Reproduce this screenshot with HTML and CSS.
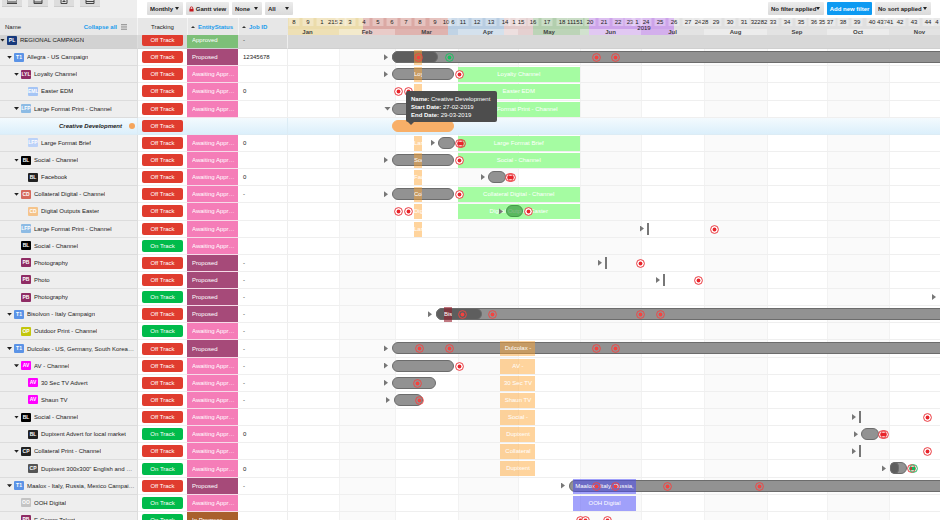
FILE: index.html
```html
<!DOCTYPE html>
<html lang="en">
<head>
<meta charset="utf-8">
<title>Campaign Gantt</title>
<link rel="stylesheet" href="styles.css">
</head>
<body>
<div class="toolbar">
  <div class="quick">
    <button aria-label="Open"><svg viewBox="0 0 10 4"><path d="M0 0V3.500H10V0M1 2H9"/></svg></button>
    <button aria-label="Save"><svg viewBox="0 0 10 4"><path d="M1 0V3.500H9V0M1 2H9"/></svg></button>
    <button aria-label="Upload"><svg viewBox="0 0 10 4"><path d="M2 0V3.500H8V0M5 0V2M3.500 1.500H6.500"/></svg></button>
    <button aria-label="Print"><svg viewBox="0 0 10 4"><path d="M1 0V3.500H9V0M1 1.500H9"/></svg></button>
  </div>
  <div class="tools">
    <span class="pick"><select class="w36" aria-label="Scale"><option>Monthly</option></select></span>
    <button class="tool w43"><svg class="lock" viewBox="0 0 6 6"><path d="M0.500 2.800H5.500V6H0.500Z" fill="#c4161c"/><path d="M1.500 3V1.900A1.500 1.500 0 0 1 4.500 1.900V3" fill="none" stroke="#c4161c"/></svg>Gantt view</button>
    <span class="pick"><select class="w30" aria-label="Grouping"><option>None</option></select></span>
    <span class="pick"><select class="w28" aria-label="Items"><option>All</option></select></span>
  </div>
  <div class="tools filters">
    <span class="pick"><select class="w56" aria-label="Filter"><option>No filter applied</option></select></span>
    <button class="tool primary w45">Add new filter</button>
    <span class="pick"><select class="w56" aria-label="Sort"><option>No sort applied</option></select></span>
  </div>
</div>
<main class="sheet">
  <div class="bands" id="bands"></div>
  <table class="gantt">
    <thead>
      <tr>
        <th class="h-name" scope="col"><span>Name</span><a href="#">Collapse all</a><svg class="menu" viewBox="0 0 6 6"><path d="M0 .5H6M0 2.200H6M0 3.900H6M0 5.600H6" stroke="#8a8a8a" stroke-width=".8"/></svg></th>
        <th class="h-track" scope="col">Tracking</th>
        <th class="h-sort" scope="col"><i class="up"></i><a href="#">EntityStatus</a></th>
        <th class="h-sort" scope="col"><i class="up"></i><a href="#">Job ID</a></th>
        <th class="scale" id="scale" scope="col"></th>
      </tr>
    </thead>
    <tbody id="rows"></tbody>
  </table>
</main>
<script src="gantt.js"></script>
</body>
</html>
```
FILE: styles.css
```css
* { box-sizing: border-box; }
body {
  margin: 0;
  height: 100vh;
  overflow: hidden;
  display: flex;
  flex-direction: column;
  background: #fff;
  color: #222;
  font: 6px/8px "Liberation Sans", Arial, sans-serif;
}
a { color: #1a9cec; text-decoration: none; }
button, select { font: inherit; color: inherit; border: 0; margin: 0; padding: 0; }

.toolbar { display: flex; height: 18px; flex: none; }
.quick { width: 137px; background: #eee; display: flex; gap: 6px; padding-left: 2px; align-items: flex-start; }
.quick button { width: 20px; height: 7px; background: #ddd; border-bottom: 1px solid #ccc; display: flex; justify-content: center; align-items: flex-start; }
.quick svg { width: 10px; height: 4px; fill: none; stroke: #444; }
.tools { display: flex; gap: 3px; padding: 2px 0 3px 10px; font-weight: bold; }
.filters { margin-left: auto; padding-right: 9px; }
.tool, .pick select { height: 13px; background: linear-gradient(#ececec, #dadada); border-radius: 1px; }
.tool { display: flex; align-items: center; justify-content: center; gap: 2px; white-space: nowrap; }
.primary { background: #0d9af2; color: #fff; }
.lock { width: 5px; height: 6px; }
.pick { position: relative; display: flex; }
.pick select { appearance: none; padding-left: 3px; }
.pick::after {
  content: "";
  position: absolute;
  right: 4px;
  top: 5px;
  border: 2px solid transparent;
  border-top: 3px solid #222;
  border-bottom: 0;
}
.w28 { width: 28px; }
.w30 { width: 30px; }
.w36 { width: 36px; }
.w43 { width: 43px; }
.w45 { width: 45px; }
.w56 { width: 56px; }

.sheet { flex: 1; position: relative; display: flex; margin-bottom: -9px; }
.bands { position: absolute; top: 17px; bottom: 0; left: 288px; right: 0; }
.band { position: absolute; top: 0; bottom: 0; border-left: 1px solid #f2f2f2; }
.band.tint { background: #fafafa; }

.gantt { position: relative; flex: 1; display: flex; flex-direction: column; }
thead { display: block; position: relative; z-index: 2; }
tr { display: grid; grid-template-columns: 138px 49px 51px 50px 1fr; min-height: 0; }
th, td { padding: 0; min-width: 0; text-align: left; }
thead tr { height: 17px; background: #e7e7e7; }
thead th { display: flex; align-items: center; }
.h-name { gap: 4px; padding: 0 10px 0 5px; border-right: 1px solid #f4f4f4; }
.h-name span { font-weight: normal; flex: 1; }
.menu { width: 6px; height: 6px; }
.h-track { justify-content: center; font-weight: normal; }
.h-sort { gap: 3px; padding-left: 3px; border-left: 1px solid #f4f4f4; }
.up { border: 2px solid transparent; border-bottom: 2px solid #333; border-top: 0; }

.scale { position: relative; display: block; overflow: hidden; background: #e0e0e0; }
.scale > * { position: absolute; white-space: nowrap; }
.season { top: 0; bottom: 0; }
.week { top: 0; height: 8px; line-height: 8px; transform: translateX(-50%); min-width: 11px; text-align: center; background: rgba(255, 255, 255, .3); font-weight: normal; }
.month { bottom: 0; height: 6px; line-height: 6px; text-align: center; color: #444; background: rgba(255, 255, 255, .12); }
.month.tint { background: rgba(255, 255, 255, .4); }
.year { top: 6px; transform: translateX(-50%); font-weight: normal; }
.sand { background: #ecdcab; }
.rose { background: #dba9a4; }
.sky { background: #b8cde2; }
.blush { background: #e2caca; }
.leaf { background: #b3cfae; }
.violet { background: #cda4ea; }

tbody { flex: 1; display: grid; grid-template-rows: repeat(29, 1fr); margin-top: -3px; min-height: 0; }
td { display: flex; align-items: center; border-bottom: 1px solid #efefef; white-space: nowrap; }
.name { background: #eee; border-bottom-color: #dcdcdc; border-right: 1px solid #ddd; gap: 2px; padding-right: 2px; }
.l1 { padding-left: 7px; }
.l2 { padding-left: 14px; }
.l3 { padding-left: 21px; }
.caret { flex: none; width: 5px; height: 3px; }
.open { background: #222; clip-path: polygon(0 0, 100% 0, 50% 100%); }
.chip { flex: none; width: 10px; height: 9px; margin-right: 1px; color: #fff; font: bold 5px/9px "Liberation Sans", sans-serif; text-align: center; border-radius: 1px; }
.title { overflow: hidden; text-overflow: ellipsis; }
.track { justify-content: center; background: #fff; }
.flag { width: 41px; height: 12px; border-radius: 2px; color: #fff; background: #e03c2e; }
.flag.on { background: #00bb4b; }
.status { color: #fff; padding: 0 1px 0 5px; border-bottom-color: #f6dbe8; }
.status span { overflow: hidden; text-overflow: ellipsis; }
.waiting { background: #f57db8; }
.proposed { background: #a64a79; }
.approved { background: #7dbf78; }
.progress { background: #a9602c; }
.job { background: #fff; padding-left: 5px; border-right: 1px solid #eee; }
.lane { position: relative; display: block; overflow: hidden; }
.root td { border-bottom-color: #d0d0d0; }
.root .name, .root .track, .root .job, .root .lane { background: #d8d8d8; }
.root .name { background: #d2d2d2; }
.active td { background: linear-gradient(#f3fafe, #dbeffb); border-color: #dcecf5; }
.active .name { justify-content: flex-end; gap: 7px; font-weight: bold; font-style: italic; }
.dot { width: 6px; height: 6px; border-radius: 3px; background: #f5a55c; }

.lane > * { position: absolute; }
.bar { top: 2px; height: 12px; border: 1px solid #6c6c6c; border-radius: 6px; background: #929292; overflow: hidden; }
.bar.done { background: #5e5e5e; }
.bar.go { background: rgba(30, 130, 40, .55); border-color: #469a4a; }
.bar.task { background: #f8af68; border-color: #f8af68; }
.block { top: 1px; height: 15px; line-height: 15px; color: #fff; text-align: center; overflow: hidden; white-space: nowrap; }
.green { background: #a5fca2; }
.amber { background: rgba(255, 165, 50, .48); }
.mark { background: rgba(255, 165, 50, .48); text-align: left; }
.wine { background: rgba(150, 30, 45, .6); text-align: left; }
.blue { background: rgba(70, 70, 250, .5); }
.expand { top: 5px; width: 4px; height: 6px; background: #777; clip-path: polygon(0 0, 100% 50%, 0 100%); }
.shrink { top: 6px; width: 7px; height: 4px; background: #777; clip-path: polygon(0 0, 100% 0, 50% 100%); }
.tick { top: 2px; width: 2px; height: 12px; background: #777; }
.stone { top: 4px; width: 9px; height: 9px; margin-left: -5px; overflow: visible; }

.tip {
  position: absolute;
  z-index: 3;
  top: 73px;
  left: calc(288px + (100% - 288px) * .181);
  width: 91px;
  padding: 4px 5px 3px;
  border-radius: 2px;
  background: #4d4d4d;
  color: #fff;
}
.tip div { white-space: nowrap; }
.tip::after {
  content: "";
  position: absolute;
  left: 2px;
  top: 100%;
  border: 3px solid transparent;
  border-top-color: #4d4d4d;
  border-bottom: 0;
}
```
FILE: gantt.js
```js
// Timeline positions run from START to START + SPAN and are drawn as percentages.
const START = 288, SPAN = 652;
const pct = n => (n / SPAN * 100).toFixed(3) + '%';
const at = x => 'left:' + pct(x - START);
const range = (a, b) => at(a) + ';width:' + pct(b - a);

const seasons = [['sand', 288, 363], ['rose', 363, 448], ['sky', 448, 504], ['blush', 504, 533], ['leaf', 533, 589], ['violet', 589, 674]];
const months = [['Jan', 276, 339], ['Feb', 339, 395], ['Mar', 395, 458], ['Apr', 458, 518], ['May', 518, 580], ['Jun', 580, 641], ['Jul', 641, 704], ['Aug', 704, 767], ['Sep', 767, 827], ['Oct', 827, 889], ['Nov', 889, 950]];
const weeks = [['8', 294], ['9', 308], ['1', 322], ['215', 333], ['2', 341], ['3', 350], ['4', 364], ['5', 378], ['6', 392], ['7', 406], ['8', 420], ['9', 435], ['10', 446], ['6', 453], ['11', 463], ['12', 477], ['13', 491], ['14', 505], ['1', 514], ['15', 521], ['16', 533], ['17', 547], ['18', 562], ['11151', 575], ['20', 590], ['21', 604], ['22', 618], ['23', 630], ['1', 637], ['24', 646], ['25', 660], ['26', 674], ['27', 688], ['24', 698], ['28', 705], ['29', 716], ['30', 730], ['31', 744], ['32282', 759], ['33', 773], ['34', 787], ['35', 801], ['36', 814], ['35', 822], ['37', 830], ['38', 843], ['39', 857], ['40', 872], ['437', 882], ['41', 890], ['42', 900], ['43', 914], ['44', 928], ['4', 937]];

document.getElementById('bands').innerHTML = months.map((m, i) =>
  `<div class="band${i % 2 ? ' tint' : ''}" style="${range(m[1], m[2])}"></div>`).join('');
document.getElementById('scale').innerHTML =
  seasons.map(s => `<div class="season ${s[0]}" style="${range(s[1], s[2])}"></div>`).join('') +
  weeks.map(w => `<span class="week" style="${at(w[1])}">${w[0]}</span>`).join('') +
  months.map((m, i) => `<span class="month${i % 2 ? ' tint' : ''}" style="${range(m[1], m[2])}">${m[0]}</span>`).join('') +
  `<span class="year" style="${at(644)}">2019</span>`;

const bar = (a, b, kind = '') => `<div class="bar ${kind}" style="${range(a, b)}"></div>`;
const block = (kind, a, b, text = '') => `<div class="block ${kind}" style="${range(a, b)}">${text}</div>`;
const green = text => block('green', 458, 579.5, text);
const mark = text => block('mark', 414, 422.5, text);
const amber = text => block('amber', 500.5, 535.5, text);
const expand = x => `<i class="expand" style="${at(x)}"></i>`;
const shrink = x => `<i class="shrink" style="${at(x)}"></i>`;
const tick = x => `<i class="tick" style="${at(x)}"></i>`;
const stone = (x, color = '#e8252b', fill = '#fff') =>
  `<svg class="stone" style="${at(x + .5)}" viewBox="0 0 9 9"><circle cx="4.500" cy="4.500" r="3.900" fill="${fill}" stroke="${color}" stroke-width=".9"/><circle cx="4.500" cy="4.500" r="1.900" fill="${color}"/></svg>`;
const stones = (...xs) => xs.map(x => stone(x)).join('');
// Two milestones that overlap: both rings stay visible.
const pair = (a, b) => stone(a) + stone(b, '#e8252b', 'none');
const inside = (...xs) => xs.map(x => stone(x, '#f5423f', 'none')).join('');

const W = ['waiting', 'Awaiting Approval'], P = ['proposed', 'Proposed'];
// level, has children, chip text, chip colour, title, on track, status, job id, lane content
const rows = [
  [0, 1, 'PL', '#17397c', 'REGIONAL CAMPAIGN', 0, ['approved', 'Approved'], '-', ''],
  [1, 1, 'T1', '#5b93e6', 'Allegra - US Campaign', 0, P, '12345678', expand(384) + bar(392, 955) + bar(392, 438, 'done') + mark('') + inside(418.5, 596, 616) + stone(449, '#13c25c', 'none')],
  [2, 1, 'LYL', '#8f2c64', 'Loyalty Channel', 0, W, '', expand(384) + bar(392, 453.5) + mark('Loy') + green('Loyalty Channel') + stones(459)],
  [3, 0, 'EML', '#a5c5f5', 'Easter EDM', 0, W, '0', mark('') + green('Easter EDM') + stones(398.5, 408.5)],
  [2, 1, 'LFP', '#8dbbe4', 'Large Format Print - Channel', 0, W, '', shrink(384) + bar(392, 453.5) + green('Large Format Print - Channel')],
  null,
  [3, 0, 'LFP', '#bcd2f8', 'Large Format Brief', 0, W, '0', mark('Lar') + expand(431) + bar(438, 455.5) + green('Large Format Brief') + pair(459, 461.5)],
  [2, 1, 'BL', '#000', 'Social - Channel', 0, W, '', expand(384) + bar(392, 453.5) + mark('Soc') + green('Social - Channel') + stones(459)],
  [3, 0, 'BL', '#222', 'Facebook', 0, W, '0', mark('Fac') + expand(481) + bar(488, 506) + pair(509.5, 511.5)],
  [2, 1, 'CD', '#d5695c', 'Collateral Digital - Channel', 0, W, '-', expand(384) + bar(392, 453.5) + mark('Col') + green('Collateral Digital - Channel') + stones(459)],
  [3, 0, 'CD', '#f5c48b', 'Digital Outputs Easter', 0, W, '', stones(398.5, 408.5) + mark('Dig') + green('Digital Outputs Easter') + expand(499) + bar(506, 522.5, 'go') + stones(528)],
  [2, 0, 'LFP', '#8dbbe4', 'Large Format Print - Channel', 0, W, '', mark('Lar') + expand(640) + tick(647) + stones(715)],
  [2, 0, 'BL', '#000', 'Social - Channel', 1, W, '', ''],
  [2, 0, 'PB', '#8f2c64', 'Photography', 0, P, '-', expand(598) + tick(605) + stones(640.5)],
  [2, 0, 'PB', '#8f2c64', 'Photo', 0, P, '-', expand(656) + tick(663) + stones(699)],
  [2, 0, 'PB', '#8f2c64', 'Photography', 1, P, '-', expand(932)],
  [1, 1, 'T1', '#5b93e6', 'Bisolvon - Italy Campaign', 0, P, '-', expand(428) + bar(436, 955) + bar(436, 482, 'done') + block('wine', 444, 452.5, 'Bis') + inside(463, 493, 640.5, 661)],
  [2, 0, 'OP', '#c3c60c', 'Outdoor Print - Channel', 1, W, '-', ''],
  [1, 1, 'T1', '#5b93e6', 'Dulcolax - US, Germany, South Korea, Japan', 0, P, '-', expand(384) + bar(392, 955) + amber('Dulcolax -') + inside(419, 449, 596, 616)],
  [2, 1, 'AV', '#f0f', 'AV - Channel', 0, W, '-', expand(384) + bar(392, 453.5) + amber('AV -') + stones(459)],
  [3, 0, 'AV', '#f0f', '30 Sec TV Advert', 0, W, '-', expand(384) + bar(392, 435.5) + amber('30 Sec TV') + inside(417)],
  [3, 0, 'AV', '#f0f', 'Shaun TV', 0, W, '-', expand(386) + bar(394, 423) + amber('Shaun TV') + inside(419)],
  [2, 1, 'BL', '#000', 'Social - Channel', 0, W, '', amber('Social -') + expand(852) + tick(859) + stones(927)],
  [3, 0, 'BL', '#222', 'Dupixent Advert for local market', 1, W, '0', amber('Dupixent') + expand(854) + bar(861.5, 879.5) + pair(882.5, 884.5)],
  [2, 1, 'CP', '#222', 'Collateral Print - Channel', 0, W, '', amber('Collateral') + expand(852) + tick(859) + stones(927)],
  [3, 0, 'CP', '#555', 'Dupixent 300x300" English and French', 1, W, '0', amber('Dupixent') + expand(882) + bar(890, 907.5) + bar(890, 899, 'done') + stones(911) + stone(913, '#13b85c', 'none')],
  [1, 1, 'T1', '#5b93e6', 'Maalox - Italy, Russia, Mexico Campaign', 0, P, '-', expand(561) + bar(569, 955) + block('blue', 573, 636, 'Maalox - Italy, Russia,') + inside(596, 616, 667, 759.5)],
  [2, 0, 'OO', '#c4c4c4', 'OOH Digital', 1, W, '', block('blue', 573, 636, 'OOH Digital')],
  [2, 0, 'PB', '#8f2c64', 'E-Comm Talent', 1, ['progress', 'In Progress'], '-', stones(580, 586, 608)]
];

document.getElementById('rows').innerHTML = rows.map((r, i) => {
  if (!r) {
    return `<tr class="active"><td class="name">Creative Development<i class="dot"></i></td><td class="track"><button class="flag">Off Track</button></td><td></td><td class="job"></td><td class="lane">${bar(392, 453.5, 'task')}</td></tr>`;
  }
  const [level, kids, code, color, title, on, status, job, lane] = r;
  return `<tr${i ? '' : ' class="root"'}>` +
    `<td class="name l${level}"><i class="caret${kids ? ' open' : ''}"></i><span class="chip" style="background:${color}">${code}</span><span class="title">${title}</span></td>` +
    `<td class="track"><button class="flag${on ? ' on' : ''}">${on ? 'On' : 'Off'} Track</button></td>` +
    `<td class="status ${status[0]}"><span>${status[1]}</span></td>` +
    `<td class="job">${job}</td><td class="lane">${lane}</td></tr>`;
}).join('');

const tip = document.createElement('div');
tip.className = 'tip';
tip.setAttribute('role', 'tooltip');
tip.innerHTML = '<div><b>Name:</b> Creative Development</div><div><b>Start Date:</b> 27-02-2019</div><div><b>End Date:</b> 29-03-2019</div>';
document.querySelector('.sheet').append(tip);
```
